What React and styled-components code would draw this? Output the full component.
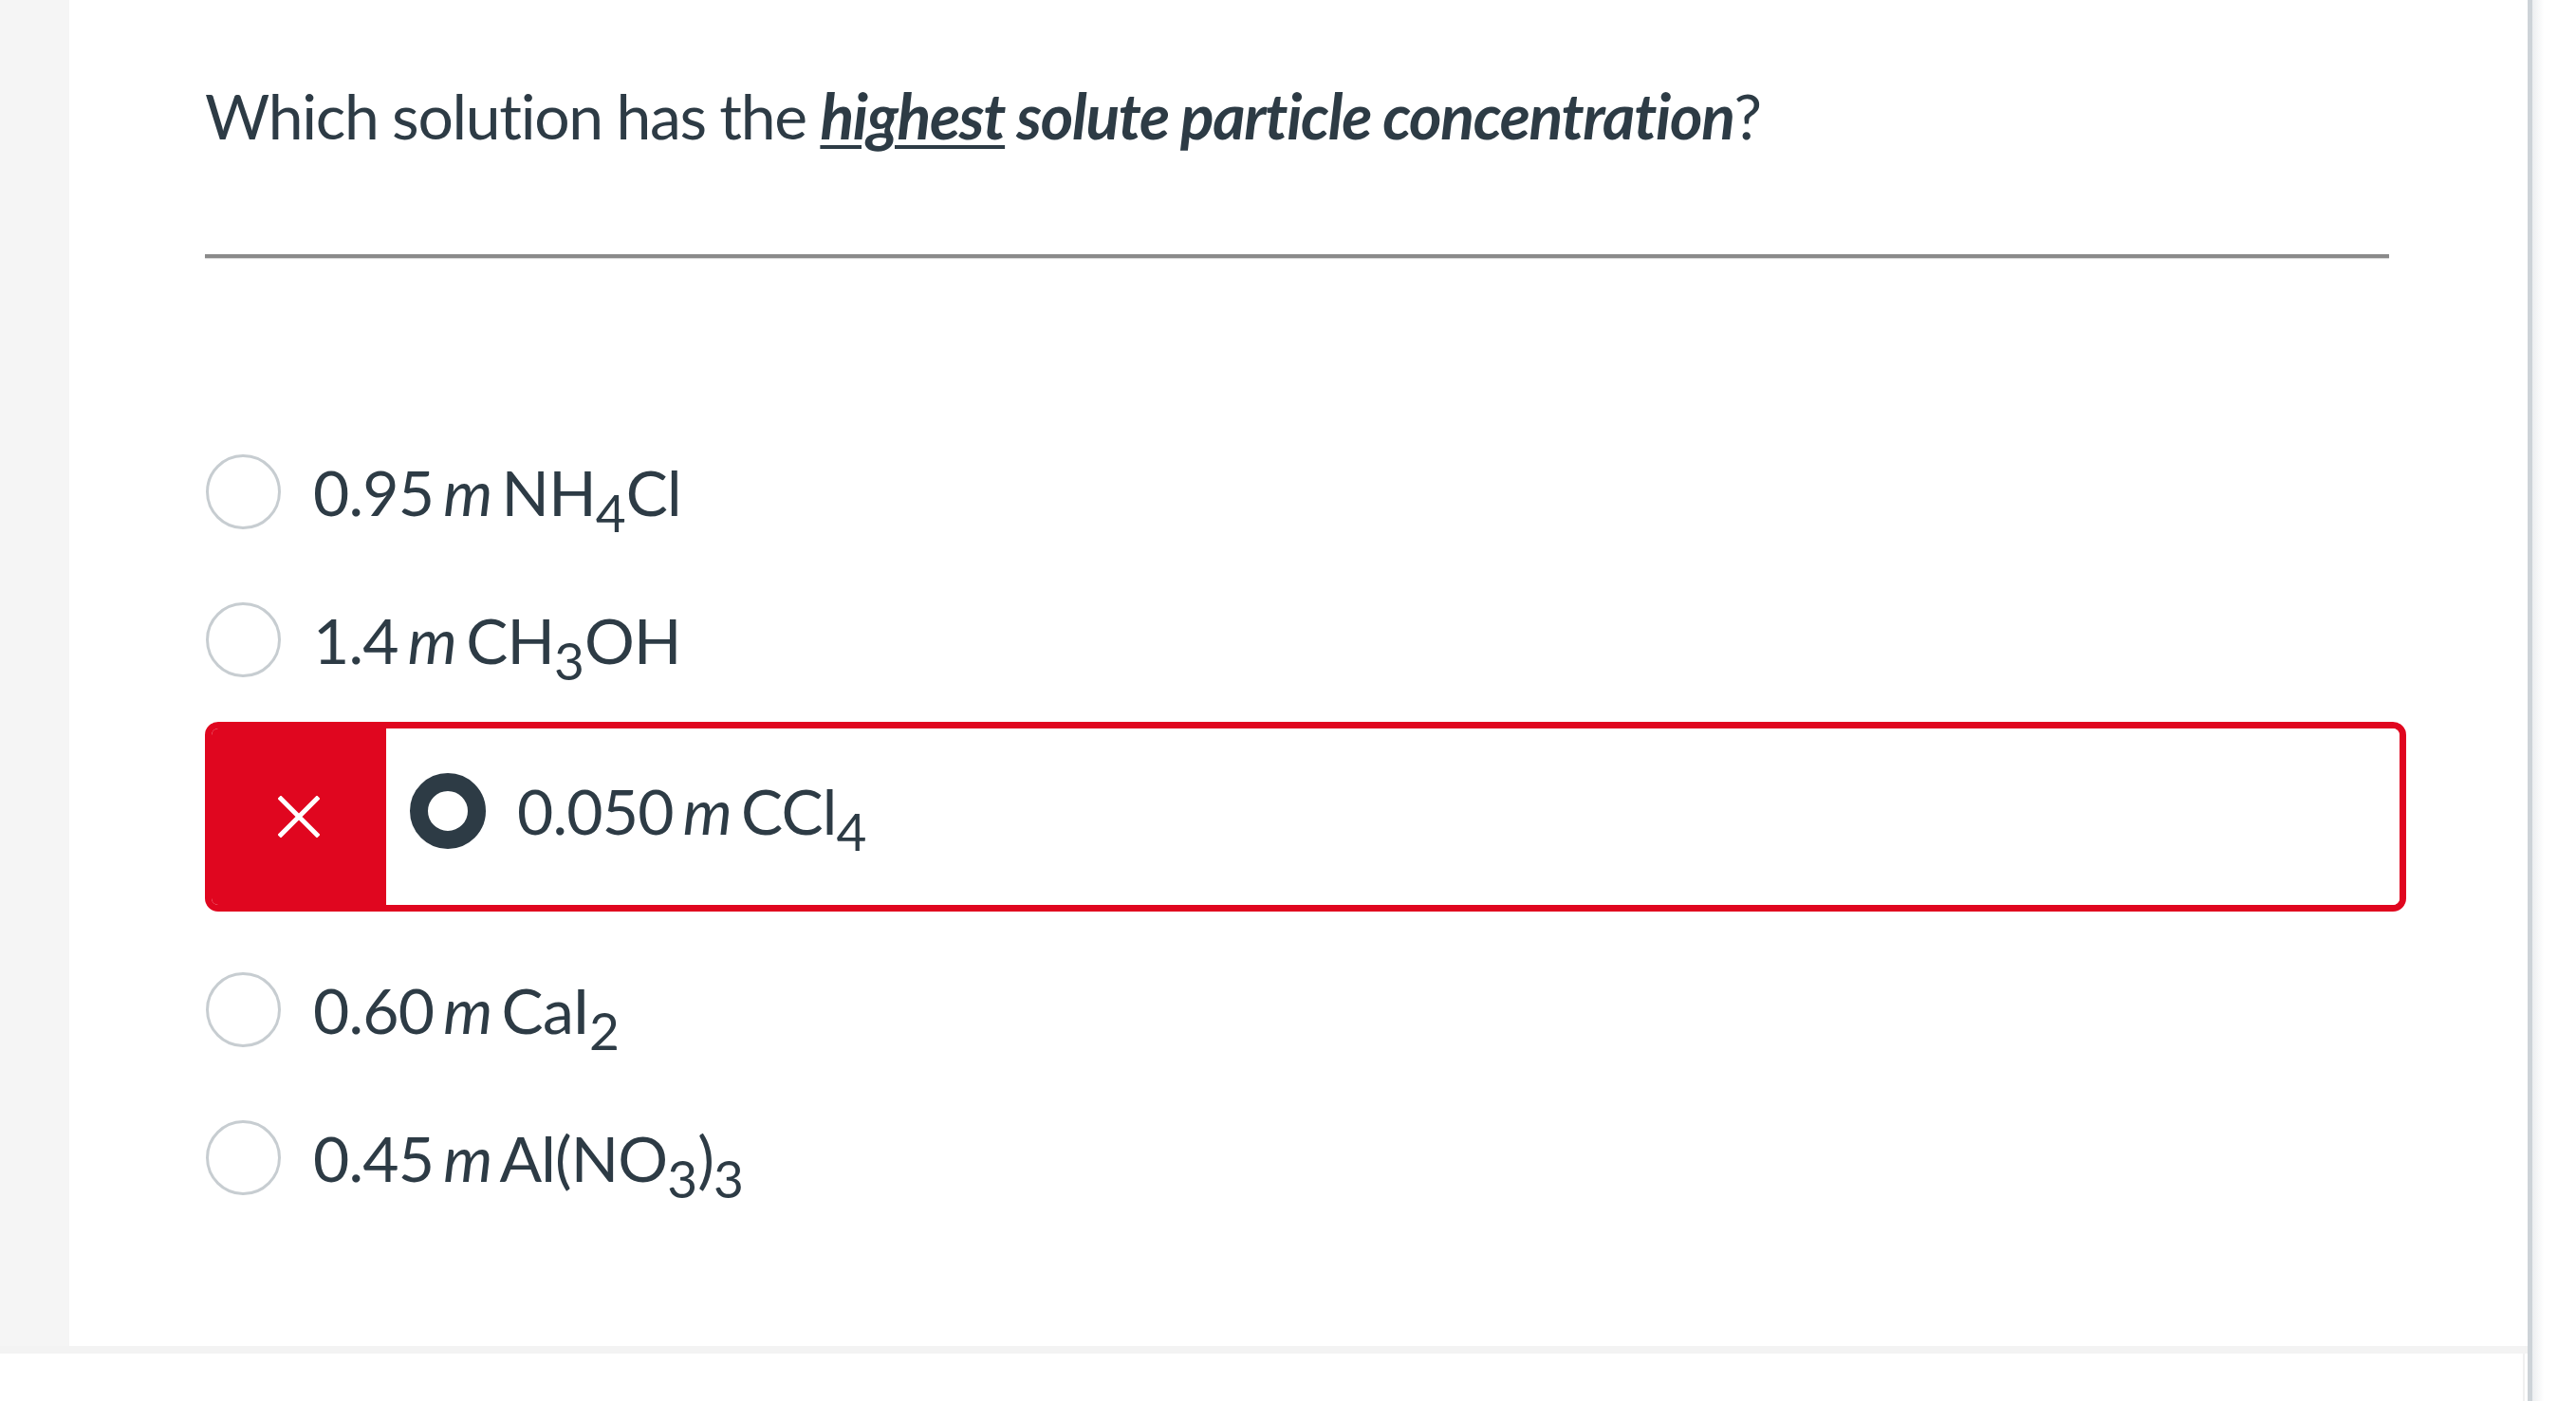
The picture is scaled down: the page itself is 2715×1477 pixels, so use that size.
import React from 'react'
import styled, { createGlobalStyle } from 'styled-components'

const GlobalStyle = createGlobalStyle`
  html, body {
    margin: 0;
    padding: 0;
    background: #ffffff;
  }
  body {
    font-family: Lato, "Open Sans", "Liberation Sans", sans-serif;
    color: #2d3b45;
  }
`

const answers = [
  { id: 1, amount: '0.95', formula: <>NH<sub>4</sub>Cl</> },
  { id: 2, amount: '1.4', formula: <>CH<sub>3</sub>OH</> },
  { id: 3, amount: '0.050', formula: <>CCl<sub>4</sub></>, selected: true, wrong: true },
  { id: 4, amount: '0.60', formula: <>CaI<sub>2</sub></> },
  { id: 5, amount: '0.45', formula: <>Al(NO<sub>3</sub>)<sub>3</sub></> },
]

const CrossIcon = () => (
  <svg width="44" height="44" viewBox="0 0 44 44" fill="none">
    <path d="M3 3 L41 41 M41 3 L3 41" stroke="#ffffff" strokeWidth="5" strokeLinecap="square" />
  </svg>
)

const AnswerText = ({ amount, formula }) => (
  <Label>
    {amount} <Molal>m</Molal> {formula}
  </Label>
)

const App = () => {
  return (
    <>
      <GlobalStyle />
      <Page>
        <Main>
          <TopArea>
            <Gutter />
            <QuestionCard>
              <QuestionText>
                Which solution has the{' '}
                <Emph><Under>highest</Under> solute particle concentration</Emph>?
              </QuestionText>
              <Rule />
              <AnswerList>
                {answers.map((a) =>
                  a.wrong ? (
                    <WrongAnswer key={a.id}>
                      <WrongFlag>
                        <CrossIcon />
                      </WrongFlag>
                      <WrongBody>
                        <Radio checked />
                        <AnswerText amount={a.amount} formula={a.formula} />
                      </WrongBody>
                    </WrongAnswer>
                  ) : (
                    <Answer key={a.id}>
                      <Radio />
                      <AnswerText amount={a.amount} formula={a.formula} />
                    </Answer>
                  )
                )}
              </AnswerList>
            </QuestionCard>
          </TopArea>
          <Strip />
          <NextCard />
        </Main>
        <RightRail />
      </Page>
    </>
  )
}

export default App

const Page = styled.div`
  display: flex;
  flex-direction: row;
  height: 1477px;
  overflow: hidden;
`

const Main = styled.div`
  width: 2664px;
  display: flex;
  flex-direction: column;
`

const TopArea = styled.div`
  display: flex;
  flex-direction: row;
  height: 1419px;
`

const Gutter = styled.div`
  width: 73px;
  background: #f5f5f5;
`

const QuestionCard = styled.div`
  flex: 1;
  background: #ffffff;
  padding: 76px 146px 0 143px;
`

const QuestionText = styled.div`
  font-size: 66px;
  line-height: 1.4;
  letter-spacing: -1.3px;
  word-spacing: -1px;
  color: #2d3b45;
`

const Emph = styled.strong`
  font-weight: 700;
  font-style: italic;
`

const Under = styled.span`
  text-decoration: underline;
  text-decoration-thickness: 4px;
  text-underline-offset: 6px;
`

const Rule = styled.div`
  margin-top: 100px;
  height: 4px;
  background: #8a8a8a;
  box-shadow: 0 1px 1px #d6d6d6;
`

const AnswerList = styled.div`
  margin-top: 168px;
  display: flex;
  flex-direction: column;
`

const Answer = styled.div`
  display: flex;
  align-items: center;
  height: 156px;
  padding-left: 1px;
`

const WrongAnswer = styled.div`
  display: flex;
  flex-direction: row;
  height: 200px;
  box-sizing: border-box;
  margin: 9px -18px 25px 0;
  border: 7px solid #e0061f;
  border-radius: 14px;
  overflow: hidden;
`

const WrongFlag = styled.div`
  width: 184px;
  background: #e0061f;
  display: flex;
  align-items: center;
  justify-content: center;
`

const WrongBody = styled.div`
  flex: 1;
  display: flex;
  align-items: center;
  padding: 0 0 13px 25px;
  background: #ffffff;
`

const Radio = styled.span`
  flex: none;
  box-sizing: border-box;
  width: ${(p) => (p.checked ? '80px' : '79px')};
  height: ${(p) => (p.checked ? '80px' : '79px')};
  border-radius: 50%;
  border: ${(p) => (p.checked ? '19px solid #2d3b45' : '3px solid #c7cdd1')};
  background: #ffffff;
  margin-right: ${(p) => (p.checked ? '33px' : '34px')};
`

const Label = styled.span`
  font-size: 66px;
  line-height: 1.2;
  letter-spacing: -0.8px;
  word-spacing: -6px;
  color: #2d3b45;
  white-space: nowrap;

  sub {
    font-size: 55px;
    line-height: 0;
    letter-spacing: 0;
    position: relative;
    top: 3px;
  }
`

const Molal = styled.i`
  font-style: italic;
`

const Strip = styled.div`
  height: 8px;
  background: #f3f3f3;
`

const NextCard = styled.div`
  flex: 1;
  background: #ffffff;
  border-right: 2px solid #f0f0f0;
  margin-right: 3px;
`

const RightRail = styled.div`
  flex: 1;
  border-left: 5px solid #cdd3d8;
  background: linear-gradient(to right, #eceef0, #ffffff 12px);
`
